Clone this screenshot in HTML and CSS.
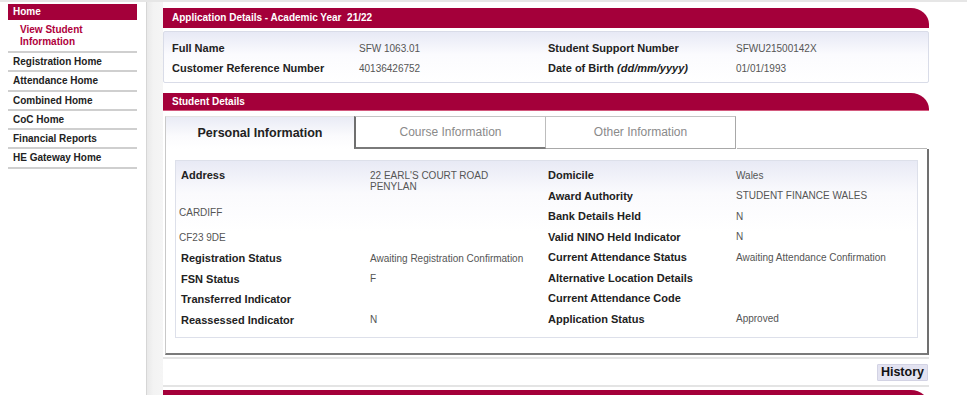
FILE: index.html
```html
<!DOCTYPE html>
<html lang="en">
<head>
<meta charset="utf-8">
<title>Application Details</title>
<link rel="stylesheet" href="styles.css">
</head>
<body>
<div class="page">
  <nav class="sidebar">
    <div class="nav-home">Home</div>
    <div class="nav-sub">View Student<br>Information</div>
    <div class="nav-item">Registration Home</div>
    <div class="nav-item">Attendance Home</div>
    <div class="nav-item">Combined Home</div>
    <div class="nav-item">CoC Home</div>
    <div class="nav-item">Financial Reports</div>
    <div class="nav-item">HE Gateway Home</div>
  </nav>
  <div class="gutter"></div>
  <main class="main">
    <div class="bar bar-first">Application Details - Academic Year&nbsp; 21/22</div>
    <div class="summary">
      <div class="lbl">Full Name</div><div class="val">SFW 1063.01</div>
      <div class="lbl">Student Support Number</div><div class="val">SFWU21500142X</div>
      <div class="lbl">Customer Reference Number</div><div class="val">40136426752</div>
      <div class="lbl">Date of Birth <i>(dd/mm/yyyy)</i></div><div class="val">01/01/1993</div>
    </div>
    <div class="bar bar-second">Student Details</div>
    <div class="tabs">
      <div class="tab tab-active">Personal Information</div>
      <div class="tab tab-2">Course Information</div>
      <div class="tab tab-3">Other Information</div>
    </div>
    <div class="tabpanel">
      <div class="inner">
        <div class="col col-left">
          <div class="row row-address"><div class="lbl">Address</div><div class="val val-multi">22 EARL'S COURT ROAD<br>PENYLAN</div></div>
          <div class="row row-city"><div class="val city">CARDIFF</div></div>
          <div class="row"><div class="val city">CF23 9DE</div></div>
          <div class="row"><div class="lbl">Registration Status</div><div class="val">Awaiting Registration Confirmation</div></div>
          <div class="row"><div class="lbl">FSN Status</div><div class="val">F</div></div>
          <div class="row"><div class="lbl">Transferred Indicator</div><div class="val"></div></div>
          <div class="row"><div class="lbl">Reassessed Indicator</div><div class="val">N</div></div>
        </div>
        <div class="col col-right">
          <div class="row"><div class="lbl">Domicile</div><div class="val">Wales</div></div>
          <div class="row"><div class="lbl">Award Authority</div><div class="val">STUDENT FINANCE WALES</div></div>
          <div class="row"><div class="lbl">Bank Details Held</div><div class="val">N</div></div>
          <div class="row"><div class="lbl">Valid NINO Held Indicator</div><div class="val">N</div></div>
          <div class="row"><div class="lbl">Current Attendance Status</div><div class="val">Awaiting Attendance Confirmation</div></div>
          <div class="row"><div class="lbl">Alternative Location Details</div><div class="val"></div></div>
          <div class="row"><div class="lbl">Current Attendance Code</div><div class="val"></div></div>
          <div class="row"><div class="lbl">Application Status</div><div class="val">Approved</div></div>
        </div>
      </div>
    </div>
    <div class="rule rule-a"></div>
    <div class="actions"><button class="history" type="button">History</button></div>
    <div class="rule rule-b"></div>
    <div class="bar bar-last"></div>
  </main>
</div>
</body>
</html>
```

FILE: styles.css
```css
html, body {
  margin: 0;
  padding: 0;
  background: #fff;
  overflow: hidden;
}

body {
  font-family: "Liberation Sans", Arial, sans-serif;
  color: #222;
}

.page {
  display: flex;
  align-items: stretch;
  min-height: 100vh;
  border-top: 2px solid #e6e6e6;
  box-sizing: border-box;
}

/* Sidebar */
.sidebar {
  width: 129px;
  margin-left: 8px;
  padding-top: 2px;
  flex: none;
}

.nav-home {
  background: #a4003a;
  color: #fff;
  font-weight: bold;
  font-size: 10px;
  height: 16px;
  line-height: 16px;
  padding-left: 5px;
}

.nav-sub {
  color: #b0003c;
  font-weight: bold;
  font-size: 10px;
  line-height: 12px;
  padding: 4px 0 3px 12px;
  border-bottom: 2px solid #cfcfcf;
}

.nav-item {
  font-weight: bold;
  font-size: 10px;
  color: #222;
  height: 17.3px;
  line-height: 18px;
  padding-left: 5px;
  border-bottom: 2px solid #cfcfcf;
}

.gutter {
  flex: none;
  width: 16px;
  margin-left: 9px;
  border-left: 1px solid #d6d6d6;
  background: linear-gradient(to right, #e9e9e9, #f3f3f3 40%, #f5f5f5);
}

/* Main */
.main {
  width: 766px;
  flex: none;
  display: flex;
  flex-direction: column;
}

.bar {
  background: #a4003a;
  color: #fff;
  font-weight: bold;
  font-size: 10px;
  padding-left: 9px;
  border-top-right-radius: 18px 16px;
}

.bar-first {
  margin-top: 6px;
  height: 20px;
  line-height: 20px;
}

.bar-second {
  margin-top: 10px;
  height: 17px;
  line-height: 17px;
  border-bottom: 1px solid #d35a7e;
}

.bar-last {
  height: 22px;
  margin-top: 3px;
}

.summary {
  margin-top: 3px;
  border: 1px solid #d9dce8;
  border-radius: 2px;
  background: linear-gradient(#e7e9f5, #fbfbfe 45%, #fff);
  padding: 6px 8px 4px;
  display: grid;
  grid-template-columns: 187px 189px 188px 1fr;
  grid-auto-rows: 20px;
  align-items: center;
}

.lbl {
  font-weight: bold;
  font-size: 11px;
  color: #222;
  white-space: nowrap;
}

.val {
  font-size: 10px;
  color: #555;
  white-space: nowrap;
}

/* Tabs */
.tabs {
  display: flex;
  margin-top: 5px;
  margin-left: 2px;
  height: 33px;
}

.tab {
  box-sizing: border-box;
  height: 33px;
  display: flex;
  align-items: center;
  justify-content: center;
  font-size: 12px;
  color: #8a8a8a;
  padding-bottom: 1px;
}

.tab-active {
  width: 189px;
  font-size: 12.5px;
  font-weight: bold;
  color: #222;
  border-left: 1px solid #c9c9c9;
  border-top: 1px solid #e2e2e2;
  background: linear-gradient(#e9ebf5, #fbfbfd 60%, #fff);
}

.tab-2 {
  width: 192px;
  border-left: 2px solid #6f6f6f;
  border-top: 1px solid #c4c4c4;
  border-bottom: 2px solid #7a7a7a;
  border-right: 1px solid #bdbdbd;
  background: #fff;
}

.tab-3 {
  width: 190px;
  border-top: 1px solid #c4c4c4;
  border-right: 1px solid #a8a8a8;
  border-bottom: 1px solid #a8a8a8;
  background: #fff;
}

.tabpanel {
  margin-left: 2px;
  width: 764px;
  box-sizing: border-box;
  height: 206px;
  border-left: 1px solid #c9c9c9;
  border-right: 2px solid #707070;
  border-bottom: 2px solid #7a7a7a;
  padding: 11px 9px 0 9px;
  position: relative;
}

.tabpanel::before {
  content: "";
  position: absolute;
  left: 571px;
  right: 0;
  top: -1px;
  border-top: 1px solid #b8b8b8;
}

.inner {
  box-sizing: border-box;
  height: 178px;
  border: 1px solid #dde0ea;
  background: linear-gradient(#e8eaf5, #fafafd 18%, #fff 40%);
  display: flex;
  padding: 4px 0 0 5px;
}

.col {
  display: flex;
  flex-direction: column;
}

.col-left {
  width: 367px;
  flex: none;
}

.col-right {
  flex: 1;
}

.row {
  display: grid;
  height: 20.5px;
  align-items: center;
}

.col-left .row {
  grid-template-columns: 189px 1fr;
}

.col-right .row {
  grid-template-columns: 188px 1fr;
}

.row-address {
  height: 32.75px;
  align-items: start;
  padding-top: 4.5px;
  line-height: 11px;
}

.val-multi {
  line-height: 11px;
}

.row-city {
  margin-bottom: 4.5px;
}

.city {
  margin-left: -2px;
}

.rule {
  height: 2px;
  background: #e4e4e4;
}

.rule-a {
  margin-top: 2px;
}

.actions {
  display: flex;
  justify-content: flex-end;
  padding: 5px 1px 4px 0;
}

.history {
  font-family: "Liberation Sans", Arial, sans-serif;
  font-weight: bold;
  font-size: 12.5px;
  color: #111;
  background: #e3e3f1;
  border: 1px solid #d3d3e4;
  border-radius: 1px;
  height: 17px;
  line-height: 15px;
  padding: 0 3px;
  margin: 0;
}
```
